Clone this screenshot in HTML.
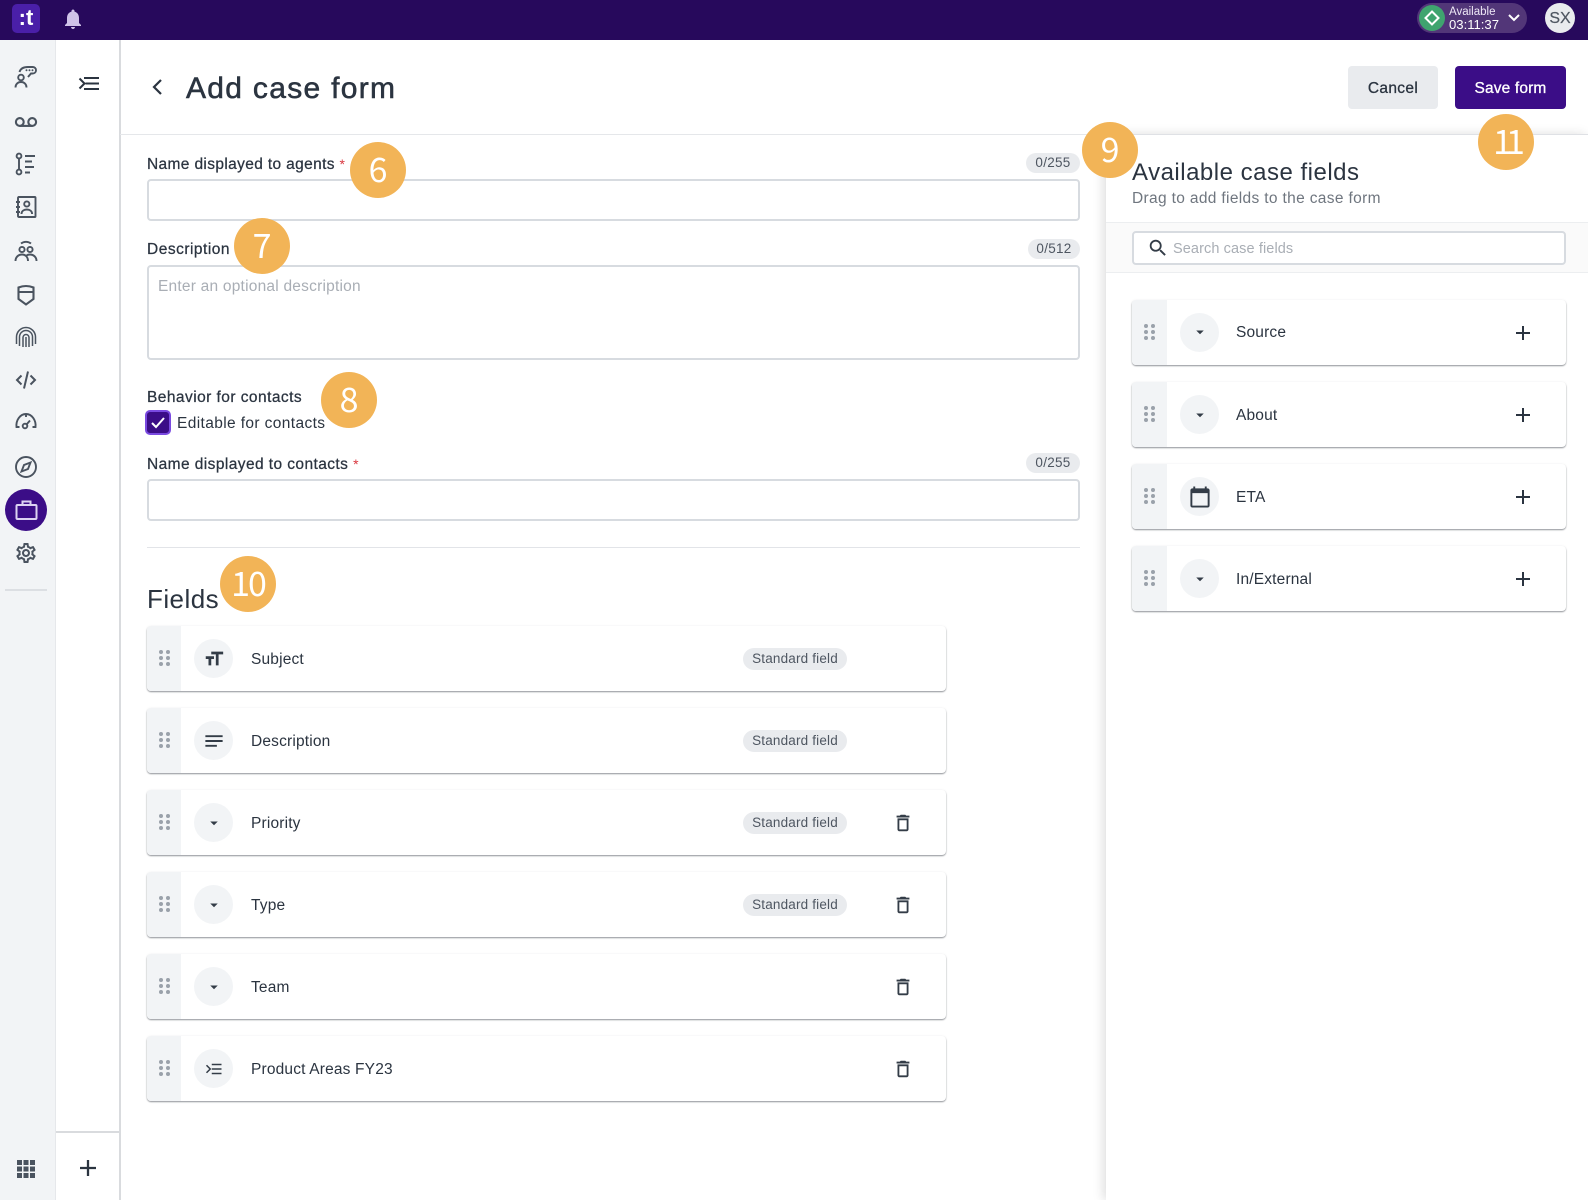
<!DOCTYPE html>
<html lang="en">
<head>
<meta charset="utf-8">
<title>Add case form</title>
<style>
*{box-sizing:border-box}
html,body{margin:0;padding:0;width:1588px;height:1200px;overflow:hidden;background:#fff;font-family:"Liberation Sans",sans-serif;color:#2b3440}
body{filter:blur(.3px)}
.a{position:absolute}
.t{position:absolute;line-height:20px;white-space:nowrap;font-size:15.5px;letter-spacing:.35px;color:#2b3440}
.m{-webkit-text-stroke:.25px currentColor;letter-spacing:.36px}
.r{color:#d9363e;font-size:14px;-webkit-text-stroke:0}
.ph{color:#a9aeb5;letter-spacing:.22px}
.inp{position:absolute;border:2px solid #d7dbe0;border-radius:4px;background:#fff}
.chip{position:absolute;height:20px;border-radius:10px;background:#e9ebee;font-size:13.5px;line-height:20.5px;color:#4e5661;letter-spacing:.28px;text-align:center}
.badge{position:absolute;width:56px;height:56px;margin:-28px 0 0 -28px;border-radius:50%;background:#f2b457;color:#fff;font-family:"Noto Sans CJK JP","Liberation Sans",sans-serif;font-size:34px;line-height:52px;text-align:center;z-index:5}
.card{position:absolute;height:65px;background:#fff;border-radius:4px;box-shadow:0 1px 1.5px rgba(40,45,55,.5),0 0 3px rgba(0,0,0,.04)}
.hd{position:absolute;left:0;top:0;width:34px;height:65px;background:#f2f4f6;border-radius:4px 0 0 4px}
.hd svg{position:absolute;left:10px;top:23px}
.cc{position:absolute;left:47px;top:13px;width:39px;height:39px;border-radius:50%;background:#f2f4f6}
.cc svg{position:absolute;left:50%;top:50%;transform:translate(-50%,-50%)}
.lb{position:absolute;left:104px;top:23.5px;line-height:20px;font-size:15.5px;letter-spacing:.17px;color:#2b3440;white-space:nowrap}
.sf{position:absolute;left:596px;top:21.5px;width:104px;height:22px;border-radius:11px;background:#e9ebee;font-size:13.5px;line-height:21.5px;color:#4e5661;letter-spacing:.18px;text-align:center}
.tr{position:absolute;left:745px;top:22px}
.pl{position:absolute;left:381px;top:23px}
.rc .hd{width:35px}
.rc .cc{left:48px}
.ni{position:absolute;left:14px;fill:none;stroke:#4a535f;stroke-width:1.9}
.ni .f{fill:#4a535f;stroke:none}
</style>
</head>
<body>
<svg width="0" height="0" style="position:absolute">
<defs>
<symbol id="dots" viewBox="0 0 16 18"><g fill="#9aa1aa"><circle cx="4" cy="3" r="2"/><circle cx="11" cy="3" r="2"/><circle cx="4" cy="9" r="2"/><circle cx="11" cy="9" r="2"/><circle cx="4" cy="15" r="2"/><circle cx="11" cy="15" r="2"/></g></symbol>
<symbol id="caret" viewBox="0 0 24 24"><path fill="#333c47" d="M7 10l5 5 5-5z"/></symbol>
<symbol id="trash" viewBox="0 0 24 24"><path fill="#333c47" d="M6 19c0 1.100.9 2 2 2h8c1.100 0 2-.9 2-2V7H6v12zM8 9h8v10H8V9zm7.500-5l-1-1h-5l-1 1H5v2h14V4z"/></symbol>
<symbol id="plus" viewBox="0 0 14 14"><path stroke="#2b3440" stroke-width="2" d="M7 0v14M0 7h14"/></symbol>
<symbol id="indent" viewBox="0 0 24 24"><path fill="none" stroke="#333c47" stroke-width="2" d="M9 6h13M9 12h13M9 18h13M2 7l5 5-5 5"/></symbol>
</defs>
</svg>

<!-- top bar -->
<div class="a" style="left:0;top:0;width:1588px;height:40px;background:#27095c"></div>
<div class="a" style="left:12px;top:4px;width:28px;height:29px;border-radius:5px;background:#4a1fa8;color:#fff;font-weight:bold;font-size:22px;line-height:27px;text-align:center">:t</div>
<svg class="a" style="left:61px;top:7px" width="24" height="24" viewBox="0 0 24 24"><path fill="#cfc3e8" d="M12 22c1.100 0 2-.9 2-2h-4c0 1.100.9 2 2 2zm6-6v-5c0-3.070-1.630-5.640-4.500-6.320V4c0-.83-.67-1.500-1.500-1.500s-1.500.67-1.500 1.500v.68C7.640 5.360 6 7.920 6 11v5l-2 2v1h16v-1l-2-2z"/></svg>
<div class="a" style="left:1417px;top:3px;width:110px;height:30px;border-radius:15px;background:#523678"></div>
<div class="a" style="left:1419px;top:5px;width:26px;height:26px;border-radius:50%;background:#3fa46f"></div>
<svg class="a" style="left:1423px;top:9px" width="18" height="18" viewBox="0 0 18 18"><path fill="none" stroke="#fff" stroke-width="2" d="M9 2.500L15.500 9 9 15.500 2.500 9z"/></svg>
<div class="t" style="left:1449px;top:2px;font-size:11.5px;color:#eee8f6;letter-spacing:0">Available</div>
<div class="t" style="left:1449px;top:15px;font-size:13.1px;color:#fff;letter-spacing:0">03:11:37</div>
<svg class="a" style="left:1507px;top:13px" width="14" height="10" viewBox="0 0 14 10"><path fill="none" stroke="#fff" stroke-width="2" d="M2 2l5 5 5-5"/></svg>
<div class="a" style="left:1545px;top:3px;width:30px;height:30px;border-radius:50%;background:#e9ebee;color:#4e5661;font-size:16px;line-height:31px;text-align:center;-webkit-text-stroke:.2px currentColor">SX</div>

<!-- left rail -->
<div class="a" style="left:0;top:40px;width:56px;height:1160px;background:#f2f4f6;border-right:1px solid #e6e8eb"></div>
<div class="a" style="left:119px;top:40px;width:2px;height:1160px;background:#d9dbde"></div>

<svg class="ni" style="top:65px" width="24" height="24" viewBox="0 0 24 24"><circle cx="7" cy="12.500" r="2.800"/><path d="M1.500 22.500c0-3.500 2.500-5.500 5.500-5.500s5.500 2 5.500 5.500"/><path d="M5.500 7C6.500 3.500 10 2 14 2h4.500c2 0 3.500 1.300 3.500 3.200S20.500 8.500 18.500 8.500H17l-3 3.500"/><circle class="f" cx="12.500" cy="5.300" r="1"/><circle class="f" cx="15.500" cy="5.300" r="1"/><circle class="f" cx="18.500" cy="5.300" r="1"/></svg>
<svg class="ni" style="top:109.500px" width="24" height="24" viewBox="0 0 24 24"><circle cx="5.800" cy="12" r="3.900" stroke-width="2.100"/><circle cx="18.200" cy="12" r="3.900" stroke-width="2.100"/><path d="M5.800 15.900h12.400" stroke-width="2.100"/></svg>
<svg class="ni" style="top:152px" width="24" height="24" viewBox="0 0 24 24"><circle cx="5" cy="4" r="2.400"/><circle cx="5" cy="20" r="2.400"/><path d="M5 6.200v11.600M11 4h10M11 9.500h7M11 15h9M11 20.500h5"/></svg>
<svg class="ni" style="top:195px" width="24" height="24" viewBox="0 0 24 24"><rect x="4" y="2" width="17.500" height="20" rx=".8"/><path d="M2 7h4M2 12h4M2 17h4"/><circle cx="12.800" cy="9" r="2.600"/><path d="M7.500 19c0-3 2.500-4.500 5.300-4.500s5.300 1.500 5.300 4.500"/></svg>
<svg class="ni" style="top:240px" width="24" height="24" viewBox="0 0 24 24"><path d="M7 3.500c3-2.300 7-2.300 10 0"/><circle cx="8" cy="9.500" r="2.600"/><circle cx="16" cy="9.500" r="2.600"/><path d="M1.500 21c0-4 3-6.500 6.500-6.500s6 2.500 6 6.500M12.500 15.500c1-.7 2.200-1 3.500-1 3.500 0 6.500 2.500 6.500 6.500"/></svg>
<svg class="ni" style="top:283px" width="24" height="24" viewBox="0 0 24 24"><path d="M4.500 4.500Q12 1.500 19.500 4.500V16L12 21.500 4.500 16zM4.500 9h15" stroke-width="2.100"/></svg>
<svg class="ni" style="top:325px" width="24" height="24" viewBox="0 0 24 24"><path d="M2.500 19v-7a9.500 9.500 0 0 1 19 0v7M5.500 21v-9a6.500 6.500 0 0 1 13 0v9M9 22v-9.500a3 3 0 0 1 6 0V22M12 12v10" stroke-width="1.500"/></svg>
<svg class="ni" style="top:368px" width="24" height="24" viewBox="0 0 24 24"><path d="M7.500 7.500L3 12l4.500 4.500M16.500 7.500L21 12l-4.500 4.500M14 3.500L10 20.500" stroke-width="2"/></svg>
<svg class="ni" style="top:408px" width="24" height="24" viewBox="0 0 24 24"><path d="M5.500 19H2.500c-.8-6.500 3.500-13 9.500-13s10.300 6.500 9.500 13h-3M12 6v3M12.500 16.500l3.500-4"/><circle cx="11" cy="18" r="2.300"/></svg>
<svg class="ni" style="top:455px" width="24" height="24" viewBox="0 0 24 24"><circle cx="12" cy="12" r="10"/><path d="M16.500 7.500L14 14l-6.500 2.500L10 10z"/></svg>
<div class="a" style="left:5px;top:489px;width:42px;height:42px;border-radius:50%;background:#3b0d87"></div>
<svg class="a" style="left:14px;top:498px" width="24" height="24" viewBox="0 0 24 24"><path fill="none" stroke="#dcd2f2" stroke-width="2" d="M3.500 7h18a1 1 0 0 1 1 1v12a1 1 0 0 1-1 1h-18a1 1 0 0 1-1-1V8a1 1 0 0 1 1-1zM8.500 7V3.500h8V7"/></svg>
<svg class="ni" style="top:541px" width="24" height="24" viewBox="0 0 24 24"><path class="f" d="M19.430 12.980c.04-.32.07-.64.07-.98 0-.34-.03-.66-.07-.98l2.110-1.650c.19-.15.24-.42.12-.64l-2-3.460c-.09-.16-.26-.25-.44-.25-.06 0-.12.01-.17.03l-2.490 1c-.52-.4-1.080-.73-1.690-.98l-.38-2.650C14.460 2.180 14.250 2 14 2h-4c-.25 0-.46.18-.49.42l-.38 2.650c-.61.25-1.170.59-1.690.98l-2.490-1c-.06-.02-.12-.03-.18-.03-.17 0-.34.09-.43.25l-2 3.460c-.13.22-.07.49.12.64l2.110 1.650c-.04.32-.07.65-.07.98 0 .33.03.66.07.98l-2.110 1.650c-.19.15-.24.42-.12.64l2 3.460c.09.16.26.25.44.25.06 0 .12-.01.17-.03l2.490-1c.52.4 1.080.73 1.690.98l.38 2.650c.03.24.24.42.49.42h4c.25 0 .46-.18.49-.42l.38-2.650c.61-.25 1.170-.59 1.690-.98l2.490 1c.06.02.12.03.18.03.17 0 .34-.09.43-.25l2-3.460c.12-.22.07-.49-.12-.64l-2.110-1.650zm-1.980-1.710c.04.31.05.52.05.73 0 .21-.02.43-.05.73l-.14 1.130.89.7 1.080.84-.7 1.210-1.270-.51-1.040-.42-.9.68c-.43.32-.84.56-1.250.73l-1.060.43-.16 1.130-.2 1.350h-1.400l-.19-1.350-.16-1.130-1.060-.43c-.43-.18-.83-.41-1.230-.71l-.91-.7-1.060.43-1.270.51-.7-1.210 1.080-.84.89-.7-.14-1.130c-.03-.31-.05-.54-.05-.74s.02-.43.05-.73l.14-1.130-.89-.7-1.080-.84.7-1.210 1.270.51 1.040.42.9-.68c.43-.32.84-.56 1.250-.73l1.060-.43.16-1.130.2-1.350h1.390l.19 1.350.16 1.130 1.060.43c.43.18.83.41 1.230.71l.91.7 1.060-.43 1.270-.51.7 1.210-1.070.85-.89.7.14 1.130zM12 8c-2.210 0-4 1.790-4 4s1.790 4 4 4 4-1.790 4-4-1.790-4-4-4zm0 6c-1.100 0-2-.9-2-2s.9-2 2-2 2 .9 2 2-.9 2-2 2z"/></svg>
<div class="a" style="left:5px;top:589px;width:42px;height:2px;background:#dcdfe3"></div>
<svg class="a" style="left:17px;top:1160px" width="18" height="18" viewBox="0 0 18 18"><g fill="#4a535f"><rect width="5" height="5"/><rect x="6.500" width="5" height="5"/><rect x="13" width="5" height="5"/><rect y="6.500" width="5" height="5"/><rect x="6.500" y="6.500" width="5" height="5"/><rect x="13" y="6.500" width="5" height="5"/><rect y="13" width="5" height="5"/><rect x="6.500" y="13" width="5" height="5"/><rect x="13" y="13" width="5" height="5"/></g></svg>

<!-- second column -->
<svg class="a" style="left:78px;top:74px" width="22" height="18" viewBox="0 0 22 18"><path fill="none" stroke="#2b3440" stroke-width="2" d="M6 4h15M7.500 9.500h13.500M6 15h15M1.500 4.500L6.500 9.500 1.500 14.500"/></svg>
<div class="a" style="left:56px;top:1131px;width:63px;height:2px;background:#d9dbde"></div>
<svg class="a" style="left:79.500px;top:1159.500px;width:16px;height:16px" viewBox="0 0 14 14"><use href="#plus"/></svg>

<!-- header -->
<svg class="a" style="left:150px;top:78px" width="14" height="18" viewBox="0 0 14 18"><path fill="none" stroke="#2b3440" stroke-width="2.200" d="M11 2L4 9l7 7"/></svg>
<div class="t" style="left:186px;top:69px;font-size:30px;line-height:40px;letter-spacing:1.3px;-webkit-text-stroke:.55px currentColor">Add case form</div>
<div class="a" style="left:1348px;top:66px;width:90px;height:43px;border-radius:4px;background:#e9ebee;color:#2b3440;font-size:15.5px;line-height:45px;text-align:center;letter-spacing:.35px;-webkit-text-stroke:.3px currentColor">Cancel</div>
<div class="a" style="left:1455px;top:66px;width:111px;height:43px;border-radius:4px;background:#3b0d87;color:#fff;font-size:15.5px;line-height:45px;text-align:center;letter-spacing:.15px;-webkit-text-stroke:.3px currentColor">Save form</div>
<div class="a" style="left:120px;top:134px;width:1468px;height:1px;background:#e5e7ea"></div>

<!-- form -->
<div class="t m" style="left:147px;top:154px">Name displayed to agents <span class="r">*</span></div>
<div class="chip" style="left:1026px;top:153px;width:54px">0/255</div>
<div class="inp" style="left:147px;top:179px;width:933px;height:42px"></div>

<div class="t m" style="left:147px;top:240px;letter-spacing:.5px">Description</div>
<div class="chip" style="left:1028px;top:239px;width:52px">0/512</div>
<div class="inp" style="left:147px;top:265px;width:933px;height:95px"></div>
<div class="t ph" style="left:158px;top:277px">Enter an optional description</div>

<div class="t m" style="left:147px;top:388px;letter-spacing:.45px">Behavior for contacts</div>
<div class="a" style="left:145px;top:410px;width:26px;height:25px;border-radius:5px;background:#3b0d87;border:2px solid #7a4ae0"></div>
<svg class="a" style="left:149px;top:414px" width="18" height="17" viewBox="0 0 18 17"><path fill="none" stroke="#fff" stroke-width="2" d="M3 9l4 4 8-9"/></svg>
<div class="t" style="left:177px;top:414px;letter-spacing:.38px">Editable for contacts</div>

<div class="t m" style="left:147px;top:454px;letter-spacing:.42px">Name displayed to contacts <span class="r">*</span></div>
<div class="chip" style="left:1026px;top:453px;width:54px">0/255</div>
<div class="inp" style="left:147px;top:479px;width:933px;height:42px"></div>

<div class="a" style="left:147px;top:547px;width:933px;height:1px;background:#e2e4e8"></div>
<div class="t" style="left:147px;top:584px;font-size:26px;line-height:30px;letter-spacing:.45px">Fields</div>

<!-- field rows -->
<div class="card" style="left:147px;top:626px;width:799px"><div class="hd"><svg width="16" height="18"><use href="#dots"/></svg></div><div class="cc"><svg width="22" height="22" viewBox="0 0 24 24"><path fill="#333c47" d="M9 4v3h5v12h3V7h5V4H9zm-6 8h3v7h3v-7h3V9H3v3z"/></svg></div><div class="lb">Subject</div><div class="sf">Standard field</div></div>

<div class="card" style="left:147px;top:708px;width:799px"><div class="hd"><svg width="16" height="18"><use href="#dots"/></svg></div><div class="cc"><svg width="23" height="23" viewBox="0 0 24 24"><path fill="#333c47" d="M3 18h12v-2H3v2zM3 6v2h18V6H3zm0 7h18v-2H3v2z"/></svg></div><div class="lb">Description</div><div class="sf">Standard field</div></div>

<div class="card" style="left:147px;top:790px;width:799px"><div class="hd"><svg width="16" height="18"><use href="#dots"/></svg></div><div class="cc"><svg width="18" height="18"><use href="#caret"/></svg></div><div class="lb">Priority</div><div class="sf">Standard field</div><svg class="tr" width="22" height="22"><use href="#trash"/></svg></div>

<div class="card" style="left:147px;top:872px;width:799px"><div class="hd"><svg width="16" height="18"><use href="#dots"/></svg></div><div class="cc"><svg width="18" height="18"><use href="#caret"/></svg></div><div class="lb">Type</div><div class="sf">Standard field</div><svg class="tr" width="22" height="22"><use href="#trash"/></svg></div>

<div class="card" style="left:147px;top:954px;width:799px"><div class="hd"><svg width="16" height="18"><use href="#dots"/></svg></div><div class="cc"><svg width="18" height="18"><use href="#caret"/></svg></div><div class="lb">Team</div><svg class="tr" width="22" height="22"><use href="#trash"/></svg></div>

<div class="card" style="left:147px;top:1036px;width:799px"><div class="hd"><svg width="16" height="18"><use href="#dots"/></svg></div><div class="cc"><svg width="18" height="18"><use href="#indent"/></svg></div><div class="lb">Product Areas FY23</div><svg class="tr" width="22" height="22"><use href="#trash"/></svg></div>

<!-- right panel -->
<div class="a" style="left:1106px;top:134px;width:482px;height:1066px;background:#fff;border-top:1px solid #dfe1e5;box-shadow:-3px 0 10px rgba(0,0,0,.13)"></div>
<div class="t" style="left:1132px;top:158px;font-size:24px;line-height:30px;letter-spacing:.5px">Available case fields</div>
<div class="t" style="left:1132px;top:189px;color:#6f767f;letter-spacing:.34px">Drag to add fields to the case form</div>
<div class="a" style="left:1106px;top:222px;width:482px;height:51px;background:#fafafa;border-top:1px solid #eceef0;border-bottom:1px solid #eceef0"></div>
<div class="inp" style="left:1132px;top:231px;width:434px;height:34px"></div>
<svg class="a" style="left:1147px;top:237px" width="22" height="22" viewBox="0 0 24 24"><path fill="#333c47" d="M15.500 14h-.79l-.28-.27C15.410 12.590 16 11.110 16 9.500 16 5.910 13.090 3 9.500 3S3 5.910 3 9.500 5.910 16 9.500 16c1.610 0 3.090-.59 4.230-1.570l.27.28v.79l5 4.990L20.490 19l-4.990-5zm-6 0C7.010 14 5 11.990 5 9.500S7.010 5 9.500 5 14 7.010 14 9.500 11.990 14 9.500 14z"/></svg>
<div class="t ph" style="left:1173px;top:238.500px;font-size:14.5px;letter-spacing:.1px">Search case fields</div>

<div class="card rc" style="left:1132px;top:299.500px;width:434px"><div class="hd"><svg width="16" height="18"><use href="#dots"/></svg></div><div class="cc"><svg width="18" height="18"><use href="#caret"/></svg></div><div class="lb">Source</div><svg class="pl" width="20" height="20" viewBox="-3 -3 20 20"><use href="#plus" width="14" height="14"/></svg></div>

<div class="card rc" style="left:1132px;top:382px;width:434px"><div class="hd"><svg width="16" height="18"><use href="#dots"/></svg></div><div class="cc"><svg width="18" height="18"><use href="#caret"/></svg></div><div class="lb">About</div><svg class="pl" width="20" height="20" viewBox="-3 -3 20 20"><use href="#plus" width="14" height="14"/></svg></div>

<div class="card rc" style="left:1132px;top:464px;width:434px"><div class="hd"><svg width="16" height="18"><use href="#dots"/></svg></div><div class="cc"><svg width="23" height="23" viewBox="0 0 24 24"><path fill="#333c47" d="M20 3h-1V1h-2v2H7V1H5v2H4c-1.100 0-2 .9-2 2v16c0 1.100.9 2 2 2h16c1.100 0 2-.9 2-2V5c0-1.100-.9-2-2-2zm0 18H4V8h16v13z"/></svg></div><div class="lb">ETA</div><svg class="pl" width="20" height="20" viewBox="-3 -3 20 20"><use href="#plus" width="14" height="14"/></svg></div>

<div class="card rc" style="left:1132px;top:546px;width:434px"><div class="hd"><svg width="16" height="18"><use href="#dots"/></svg></div><div class="cc"><svg width="18" height="18"><use href="#caret"/></svg></div><div class="lb">In/External</div><svg class="pl" width="20" height="20" viewBox="-3 -3 20 20"><use href="#plus" width="14" height="14"/></svg></div>

<!-- numbered badges -->
<div class="badge" style="left:378px;top:170px">6</div>
<div class="badge" style="left:262px;top:246px">7</div>
<div class="badge" style="left:349px;top:400px">8</div>
<div class="badge" style="left:1110px;top:150px">9</div>
<div class="badge" style="left:248px;top:584px;letter-spacing:-2px">10</div>
<div class="badge" style="left:1506px;top:142px;letter-spacing:-6px">11</div>
</body>
</html>
